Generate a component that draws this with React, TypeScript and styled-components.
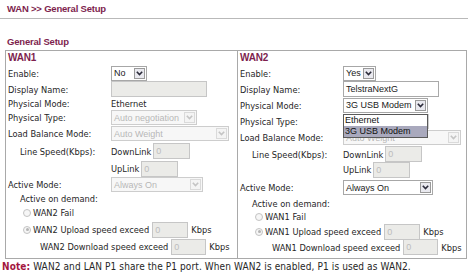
import React from 'react';
import styled, { createGlobalStyle } from 'styled-components';

const GlobalStyle = createGlobalStyle`
    html, body {
        margin: 0;
        padding: 0;
        background: #fff;
    }
    body {
        font-family: 'DejaVu Sans Condensed', 'DejaVu Sans', sans-serif;
        font-stretch: condensed;
        font-size: 9.2px;
        color: #262626;
    }
`;

const MAROON = '#7e1f4e';
const CONTROL_FONT = `'Liberation Sans', Arial, sans-serif`;
const HEAD_FONT = `'Liberation Sans', Arial, sans-serif`;

const Page = styled.div`
    width: 474px;
    height: 275px;
    overflow: hidden;
`;

const PageHeader = styled.div`
    box-sizing: border-box;
    height: 19px;
    margin-right: 6px;
    padding: 3px 0 0 7px;
    border-bottom: 1px solid #b9b9b9;
    color: ${MAROON};
    font-family: ${HEAD_FONT};
    font-weight: bold;
    font-size: 9.5px;
    letter-spacing: -0.2px;
    line-height: 11px;
`;

const SectionTitle = styled.div`
    margin: 17px 0 2px 7px;
    color: ${MAROON};
    font-family: ${HEAD_FONT};
    font-weight: bold;
    font-size: 9.5px;
    letter-spacing: -0.2px;
    line-height: 12px;
`;

const SetupBox = styled.div`
    display: grid;
    grid-template-columns: 232px 228px;
    width: max-content;
    margin-left: 5px;
    border: 1px solid #a9a9a9;
`;

const Panel = styled.div<{ $divider?: boolean }>`
    position: relative;
    padding: 0 0 3px 2px;
    border-right: ${(p) => (p.$divider ? '1px solid #a9a9a9' : 'none')};
`;

const PanelHeading = styled.div`
    height: 14px;
    line-height: 13px;
    color: ${MAROON};
    font-family: ${HEAD_FONT};
    font-weight: bold;
    font-size: 10px;
    letter-spacing: -0.2px;
`;

const Row = styled.div<{ $h: number }>`
    display: grid;
    grid-template-columns: 103px 1fr;
    align-items: center;
    height: ${(p) => p.$h}px;
    white-space: nowrap;
`;

const WideRow = styled.div<{ $h: number; $indent: number }>`
    display: flex;
    align-items: center;
    gap: 3px;
    height: ${(p) => p.$h}px;
    padding-left: ${(p) => p.$indent}px;
    white-space: nowrap;
`;

const Label = styled.span<{ $indent?: number }>`
    padding-left: ${(p) => p.$indent ?? 0}px;
`;

const Cell = styled.div`
    position: relative;
    display: flex;
    align-items: center;
    gap: 2px;
`;

const SelectBox = styled.div<{ $w: number; $h?: number; $disabled?: boolean }>`
    box-sizing: border-box;
    display: flex;
    align-items: center;
    width: ${(p) => p.$w}px;
    height: ${(p) => p.$h ?? 15}px;
    border: 1px solid ${(p) => (p.$disabled ? '#cdcdcd' : '#a7a7a7')};
    background: ${(p) => (p.$disabled ? '#f7f7f7' : '#fff')};
    color: ${(p) => (p.$disabled ? '#b8b8b8' : '#1a1a1a')};
    font-family: ${CONTROL_FONT};
    font-size: 9px;
`;

const SelectText = styled.span`
    flex: 1;
    padding-left: 2px;
    overflow: hidden;
    white-space: nowrap;
`;

const ArrowButton = styled.span<{ $disabled?: boolean }>`
    box-sizing: border-box;
    display: flex;
    align-items: center;
    justify-content: center;
    width: 11px;
    height: 11px;
    margin-right: 1px;
    border: 1px solid ${(p) => (p.$disabled ? '#dadada' : '#9a9a9a')};
    background: ${(p) => (p.$disabled ? '#f4f4f4' : '#e9e9ef')};
    color: ${(p) => (p.$disabled ? '#c4c4c4' : '#2b2b3a')};
`;

const DropList = styled.div`
    position: absolute;
    top: 100%;
    left: 0;
    z-index: 2;
    box-sizing: border-box;
    width: 85px;
    margin-top: 1px;
    border: 1px solid #5a5a5a;
    background: #fff;
    font-family: ${CONTROL_FONT};
    font-size: 9px;
    color: #111;
`;

const DropItem = styled.div<{ $active?: boolean }>`
    height: 11px;
    line-height: 11px;
    padding-left: 1px;
    background: ${(p) => (p.$active ? '#a9a9bd' : '#fff')};
`;

const TextInput = styled.div<{ $w: number; $disabled?: boolean }>`
    box-sizing: border-box;
    width: ${(p) => p.$w}px;
    height: 16px;
    padding: 0 2px;
    border: 1px solid ${(p) => (p.$disabled ? '#c6c6c6' : '#a9a9a9')};
    background: ${(p) => (p.$disabled ? '#ebebe8' : '#fff')};
    color: ${(p) => (p.$disabled ? '#bcbcbc' : '#1a1a1a')};
    font-family: ${CONTROL_FONT};
    font-size: 9px;
    line-height: 14px;
`;

const Radio = styled.span<{ $checked?: boolean }>`
    position: relative;
    box-sizing: border-box;
    width: 8px;
    height: 8px;
    margin-right: -1px;
    border: 1px solid #c3c3c3;
    border-radius: 50%;
    background: #f6f6f6;

    &::after {
        content: '';
        display: ${(p) => (p.$checked ? 'block' : 'none')};
        position: absolute;
        left: 1.5px;
        top: 1.5px;
        width: 3px;
        height: 3px;
        border-radius: 50%;
        background: #b4b4b4;
    }
`;

const Note = styled.div`
    margin: 2px 0 0 2px;
    font-size: 10px;
    letter-spacing: 0.1px;
    line-height: 12px;
    white-space: nowrap;

    & b {
        color: #a3163f;
    }
`;

const Chevron = () => (
    <svg width='7' height='5' viewBox='0 0 7 5'>
        <path d='M0.8 0.8 L3.5 3.6 L6.2 0.8' fill='none' stroke='currentColor' strokeWidth='1.6' />
    </svg>
);

interface ISelect {
    w: number;
    value: string;
    disabled?: boolean;
    h?: number;
}
const Select: React.FC<ISelect> = ({ w, value, disabled, h }) => (
    <SelectBox $w={w} $h={h} $disabled={disabled}>
        <SelectText>{value}</SelectText>
        <ArrowButton $disabled={disabled}>
            <Chevron />
        </ArrowButton>
    </SelectBox>
);

interface IWanPanel {
    name: string;
    other: string;
    divider?: boolean;
    heights: number[];
    enabled: boolean;
}

const WanPanel: React.FC<IWanPanel> = ({ name, other, divider, heights, enabled }) => {
    const off = !enabled;
    return (
        <Panel $divider={divider}>
            <PanelHeading>{name}</PanelHeading>
            <Row $h={heights[0]}>
                <Label>Enable:</Label>
                <Cell>
                    <Select w={enabled ? 33 : 36} value={enabled ? 'Yes' : 'No'} />
                </Cell>
            </Row>
            <Row $h={heights[1]}>
                <Label>Display Name:</Label>
                <Cell>
                    <TextInput $w={96} $disabled={off}>
                        {enabled ? 'TelstraNextG' : ''}
                    </TextInput>
                </Cell>
            </Row>
            <Row $h={heights[2]}>
                <Label>Physical Mode:</Label>
                <Cell>
                    {enabled ? (
                        <>
                            <Select w={85} value='3G USB Modem' />
                            <DropList>
                                <DropItem>Ethernet</DropItem>
                                <DropItem $active>3G USB Modem</DropItem>
                            </DropList>
                        </>
                    ) : (
                        'Ethernet'
                    )}
                </Cell>
            </Row>
            <Row $h={heights[3]}>
                <Label>Physical Type:</Label>
                <Cell>
                    <Select w={86} value='Auto negotiation' disabled />
                </Cell>
            </Row>
            <Row $h={heights[4]}>
                <Label>Load Balance Mode:</Label>
                <Cell>
                    <Select w={118} value='Auto Weight' disabled />
                </Cell>
            </Row>
            <Row $h={heights[5]}>
                <Label $indent={12}>Line Speed(Kbps):</Label>
                <Cell>
                    DownLink
                    <TextInput $w={37} $disabled>
                        0
                    </TextInput>
                </Cell>
            </Row>
            <Row $h={heights[6]}>
                <Label />
                <Cell>
                    UpLink
                    <TextInput $w={37} $disabled>
                        0
                    </TextInput>
                </Cell>
            </Row>
            <Row $h={heights[7]}>
                <Label>Active Mode:</Label>
                <Cell>
                    <Select w={enabled ? 90 : 92} value='Always On' disabled={off} />
                </Cell>
            </Row>
            <WideRow $h={heights[8]} $indent={12}>
                Active on demand:
            </WideRow>
            <WideRow $h={heights[9]} $indent={15}>
                <Radio />
                {other} Fail
            </WideRow>
            <WideRow $h={heights[10]} $indent={15}>
                <Radio $checked />
                {other} Upload speed exceed
                <TextInput $w={36} $disabled>
                    0
                </TextInput>
                Kbps
            </WideRow>
            <WideRow $h={heights[11]} $indent={32}>
                {other} Download speed exceed
                <TextInput $w={35} $disabled>
                    0
                </TextInput>
                Kbps
            </WideRow>
        </Panel>
    );
};

const App: React.FC = () => {
    return (
        <Page>
            <GlobalStyle />
            <PageHeader>WAN &gt;&gt; General Setup</PageHeader>
            <SectionTitle>General Setup</SectionTitle>
            <SetupBox>
                <WanPanel
                    name='WAN1'
                    other='WAN2'
                    divider
                    enabled={false}
                    heights={[16, 15, 14, 15, 17, 18, 17, 14, 14, 15, 19, 15]}
                />
                <WanPanel
                    name='WAN2'
                    other='WAN1'
                    enabled
                    heights={[16, 16, 16, 16, 17, 15, 17, 19, 12, 15, 15, 16]}
                />
            </SetupBox>
            <Note>
                <b>Note:</b> WAN2 and LAN P1 share the P1 port. When WAN2 is enabled, P1 is used as WAN2.
            </Note>
        </Page>
    );
};

export default App;
